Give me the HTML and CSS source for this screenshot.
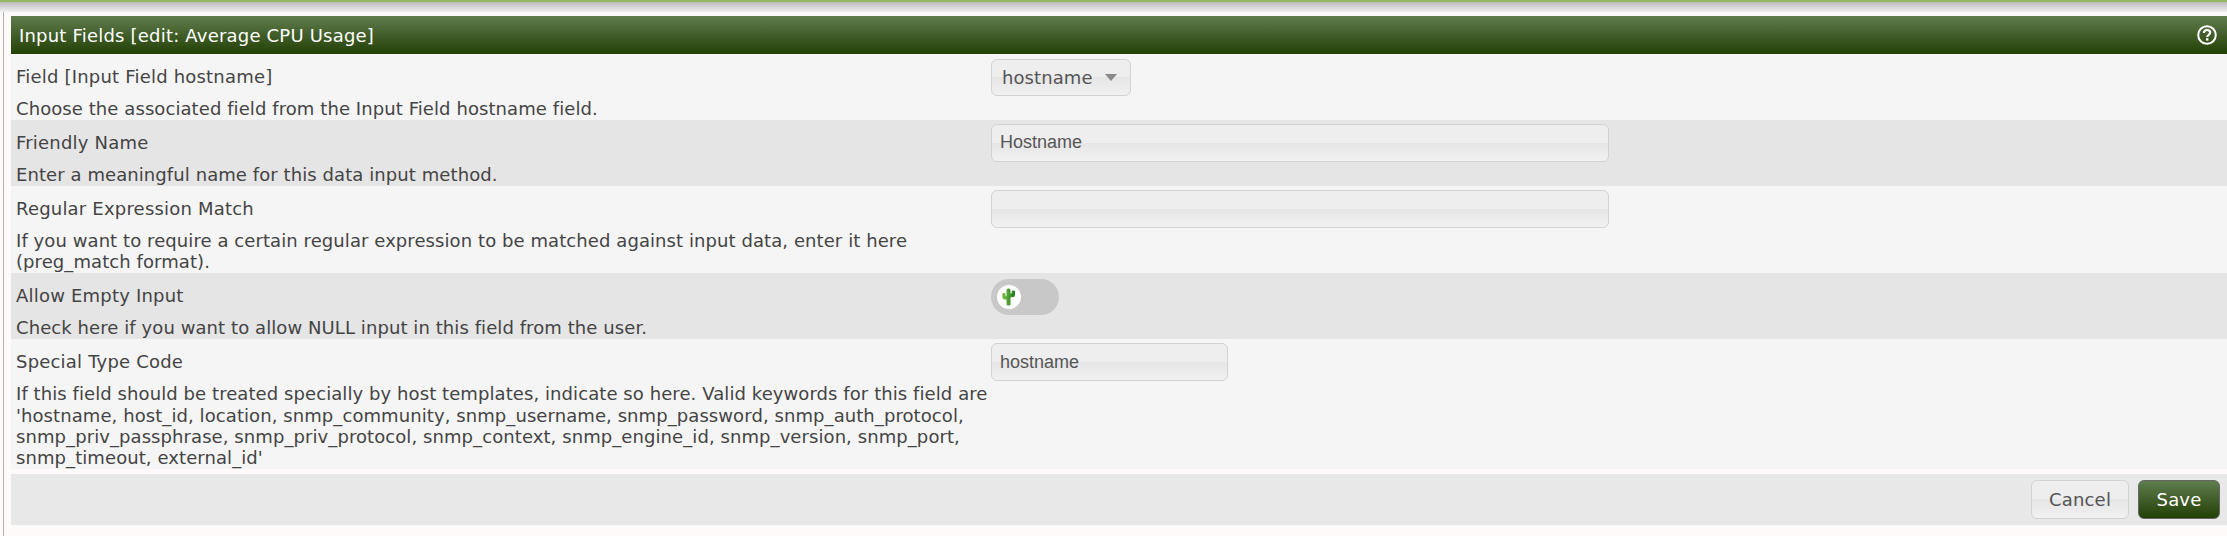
FILE: index.html
```html
<!DOCTYPE html>
<html lang="en">
<head>
    <meta charset="UTF-8">
    <meta name="viewport" content="width=device-width, initial-scale=1.0">
    <title>Input Fields</title>
    <link rel="stylesheet" href="styles.css">
</head>
<body>
    <div class="topbar"></div>
    <div class="content">
        <form class="editor">
            <div class="panel-title">
                <span>Input Fields [edit: Average CPU Usage]</span>
                <svg class="help-icon" width="22" height="22" viewBox="0 0 22 22" aria-hidden="true">
                    <circle cx="11" cy="11" r="8.8" fill="none" stroke="#fff" stroke-width="2"/>
                    <path d="M7.9 9c.1-2 1.4-3 3.2-3 1.800 0 3.100 1 3.100 2.600 0 2.300-3 2.300-3 4.400" fill="none" stroke="#fff" stroke-width="2.200"/>
                    <rect x="10" y="14.200" width="2.400" height="2.400" fill="#fff"/>
                </svg>
            </div>

            <div class="row odd">
                <div class="label-cell">
                    <div class="field-name">Field [Input Field hostname]</div>
                    <div class="field-desc">Choose the associated field from the Input Field hostname field.</div>
                </div>
                <div class="control-cell">
                    <div class="select-box">
                        <span>hostname</span>
                        <span class="select-arrow"></span>
                    </div>
                </div>
            </div>

            <div class="row even">
                <div class="label-cell">
                    <div class="field-name">Friendly Name</div>
                    <div class="field-desc">Enter a meaningful name for this data input method.</div>
                </div>
                <div class="control-cell">
                    <input class="text-input wide" type="text" value="Hostname">
                </div>
            </div>

            <div class="row odd">
                <div class="label-cell">
                    <div class="field-name">Regular Expression Match</div>
                    <div class="field-desc">If you want to require a certain regular expression to be matched against input data, enter it here (preg_match format).</div>
                </div>
                <div class="control-cell">
                    <input class="text-input wide" type="text" value="">
                </div>
            </div>

            <div class="row even">
                <div class="label-cell">
                    <div class="field-name">Allow Empty Input</div>
                    <div class="field-desc">Check here if you want to allow NULL input in this field from the user.</div>
                </div>
                <div class="control-cell">
                    <div class="toggle">
                        <div class="toggle-knob">
                            <svg width="14" height="18" viewBox="0 0 14 18" aria-hidden="true">
                                <defs>
                                    <linearGradient id="cactus" x1="0" y1="0" x2="1" y2="0">
                                        <stop offset="0" stop-color="#7cc04a"/>
                                        <stop offset="1" stop-color="#1e7a1e"/>
                                    </linearGradient>
                                </defs>
                                <path d="M4.500 2c0-2 4-2 4 0v3.500h1.200v-2c0-1.200 3.300-1.200 3.300 0v3.300c0 1.700-1.200 2.500-2.500 2.500h-2v7.200c0 1.300-4 1.300-4 0v-5h-1.500c-1.600 0-2.700-1-2.700-2.500v-3c0-1.200 3.200-1.200 3.200 0v2.300h1z" fill="url(#cactus)"/>
                            </svg>
                        </div>
                    </div>
                </div>
            </div>

            <div class="row odd">
                <div class="label-cell">
                    <div class="field-name">Special Type Code</div>
                    <div class="field-desc">If this field should be treated specially by host templates, indicate so here. Valid keywords for this field are 'hostname, host_id, location, snmp_community, snmp_username, snmp_password, snmp_auth_protocol, snmp_priv_passphrase, snmp_priv_protocol, snmp_context, snmp_engine_id, snmp_version, snmp_port, snmp_timeout, external_id'</div>
                </div>
                <div class="control-cell">
                    <input class="text-input short" type="text" value="hostname">
                </div>
            </div>

            <div class="actions">
                <button class="btn" type="button">Cancel</button>
                <button class="btn btn-save" type="submit">Save</button>
            </div>
        </form>
    </div>
</body>
</html>
```

FILE: styles.css
```css
body {
    font-family: "DejaVu Sans", Verdana, sans-serif;
    font-size: 18px;
    line-height: 21px;
    letter-spacing: .08px;
    color: #444;
    background-color: #fffafa;
    margin: 0;
}
.topbar {
    height: 12px;
    background: linear-gradient(to bottom, #94b862 0, #94b862 2px, #bcbcbc 2px, #f0f0f0 12px);
}
.content {
    margin-left: 3px;
    padding: 4px 0 0 7px;
    border-left: 1px solid #b0b0b0;
    height: 524px;
    box-sizing: border-box;
}
.panel-title {
    display: flex;
    justify-content: space-between;
    align-items: center;
    height: 38px;
    padding: 0 9px 0 8px;
    letter-spacing: .2px;
    color: #fff;
    background: linear-gradient(to bottom, #5f7c4d, #234006);
}
.row {
    display: grid;
    grid-template-columns: 980px 1fr;
}
.row.odd {
    background-color: #f5f5f5;
}
.row.even {
    background-color: #e5e5e5;
}
.label-cell {
    padding: 12px 0 .7px 5px;
}
.field-name {
    letter-spacing: .2px;
}
.field-desc {
    margin-top: 11px;
    line-height: 21.3px;
}
.control-cell {
    padding-top: 4px;
}
.text-input, .select-box {
    box-sizing: border-box;
    height: 38px;
    color: #555;
    border: 1px solid #d2d2d2;
    border-radius: 6px;
    background: linear-gradient(to bottom, #eee 0, #eee 50%, #e6e6e6 50%, #f1f1f1 100%);
}
.text-input {
    display: block;
    padding: 0 8px;
    font-family: "Liberation Sans", Arial, sans-serif;
    font-size: 18px;
}
.text-input.wide {
    width: 618px;
}
.text-input.short {
    width: 237px;
}
.select-box {
    display: inline-flex;
    align-items: center;
    gap: 12px;
    margin-top: 1px;
    height: 37px;
    width: 140px;
    padding-left: 10px;
}
.select-arrow {
    width: 0;
    height: 0;
    border-left: 6px solid transparent;
    border-right: 6px solid transparent;
    border-top: 7px solid #888;
}
.toggle {
    display: flex;
    align-items: center;
    width: 68px;
    height: 36px;
    margin-top: 2px;
    padding-left: 6px;
    box-sizing: border-box;
    border-radius: 18px;
    background-color: #c8c8c8;
}
.toggle-knob {
    display: flex;
    align-items: center;
    justify-content: center;
    width: 24px;
    height: 24px;
    border-radius: 50%;
    background-color: #fff;
}
.actions {
    display: flex;
    justify-content: flex-end;
    align-items: center;
    gap: 9px;
    height: 51px;
    margin-top: 5px;
    padding-right: 7px;
    background-color: #e8e8e8;
}
.btn {
    box-sizing: border-box;
    height: 39px;
    width: 98px;
    padding: 0;
    font-family: "DejaVu Sans", Verdana, sans-serif;
    font-size: 18px;
    letter-spacing: .2px;
    color: #555;
    border: 1px solid #d2d2d2;
    border-radius: 6px;
    background: linear-gradient(to bottom, #eee 0, #eee 50%, #e6e6e6 50%, #f1f1f1 100%);
}
.btn-save {
    width: 82px;
    color: #fff;
    border-color: #666;
    background: linear-gradient(to bottom, #5f7c4d, #234006);
}
```
